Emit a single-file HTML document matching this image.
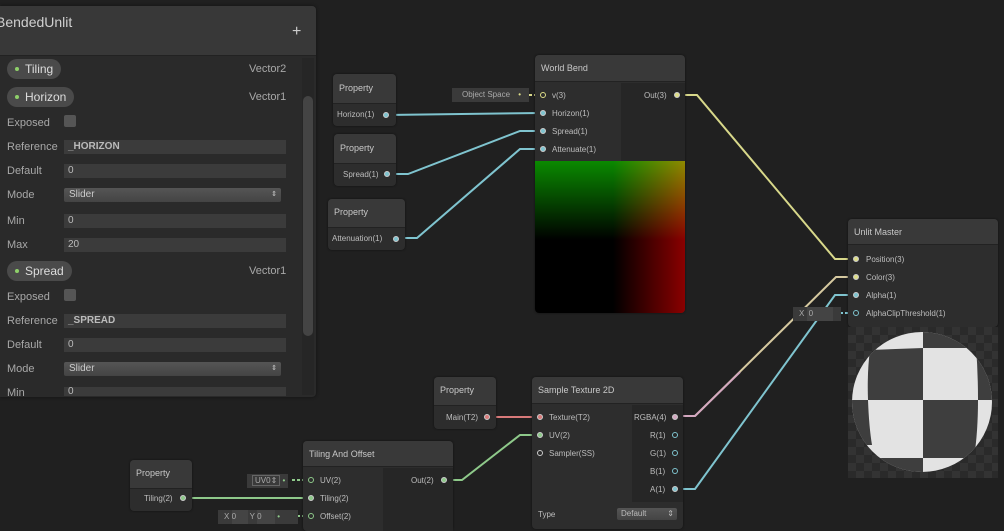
<!DOCTYPE html>
<html><head><meta charset="utf-8"><style>
*{box-sizing:border-box;margin:0;padding:0}
body{width:1004px;height:527px;overflow:hidden;background:#202020;font-family:"Liberation Sans",sans-serif;color:#c4c4c4;position:relative}
.a{position:absolute}
.node{position:absolute;background:#2d2d2d;border-radius:4px;box-shadow:0 0 2px #111}
.hd{position:absolute;left:0;right:0;top:0;background:#393939;border-radius:4px 4px 0 0;border-bottom:1px solid #222;font-size:9px;color:#c8c8c8;padding-left:6px}
.t{position:absolute;font-size:8px;color:#bdbdbd;white-space:nowrap}
.port{position:absolute;width:6px;height:6px;border-radius:50%;border:1px solid #ccc}
.bb{font-size:11px;color:#a8a8a8}
.fld{position:absolute;left:64px;width:222px;height:14px;background:#3b3b3b;font-size:10px;color:#bbb;padding-left:4px;line-height:14px}
.dd{position:absolute;left:64px;width:217px;height:14px;background:linear-gradient(#555,#444);border-radius:2px;font-size:10px;color:#ccc;padding-left:5px;line-height:14px}
.pill{position:absolute;left:7px;height:20px;border-radius:10px;background:#4a4a4a;font-size:12px;color:#ddd;line-height:20px;padding:0 8px 0 18px}
.pill:before{content:"";position:absolute;left:8px;top:8px;width:4px;height:4px;border-radius:50%;background:#8ed06a}
.lbl{position:absolute;left:7px;font-size:11px;color:#a8a8a8}
.chk{position:absolute;left:64px;width:12px;height:12px;background:#555;border-radius:2px}
.box{position:absolute;background:#3a3a3a;font-size:8px;color:#aaa;line-height:14px;height:14px}
</style></head><body>

<svg class="a" style="left:0;top:0" width="1004" height="527">
<g fill="none" stroke-width="2">
<path d="M386 115 L541 113" stroke="#7fc4cf"/>
<path d="M387 174 L408 174 L520 131 L541 131" stroke="#7fc4cf"/>
<path d="M396 238 L417 238 L520 149 L541 149" stroke="#7fc4cf"/>
<path d="M677 95 L697 95 L835 259 L856 259" stroke="#d8d88a"/>
<path d="M675 416 L695 416 L836 277 L856 277" stroke="#d6c9a0"/>
<path d="M675 416 L695 416 L740 372" stroke="#d4a8c0"/>
<path d="M675 489 L695 489 L835 295 L856 295" stroke="#7fc4cf"/>
<path d="M488 417 L540 417" stroke="#d87a7a"/>
<path d="M444 480 L462 480 L520 435 L540 435" stroke="#8ec98a"/>
<path d="M184 498 L310 498" stroke="#8ec98a"/>
<path d="M529 95 L541 95" stroke="#d8d88a" stroke-dasharray="3 2"/>
<path d="M292 480 L310 480 M292 516 L310 516" stroke="#8ec98a" stroke-dasharray="3 2"/>
<path d="M840 313 L856 313" stroke="#7fc4cf" stroke-dasharray="3 2"/>
</g></svg>

<!-- Blackboard -->
<div class="a" style="left:0;top:6px;width:316px;height:391px;background:#2a2a2a;border-radius:0 4px 4px 0;box-shadow:0 0 3px #111">
 <div class="a" style="left:0;top:0;width:316px;height:50px;background:#383838;border-bottom:1px solid #222;border-radius:0 4px 0 0"></div>
 <div class="a" style="left:-4px;top:8px;font-size:14px;color:#d0d0d0">BendedUnlit</div>
 <div class="a" style="left:292px;top:17px;font-size:16px;color:#ccc">+</div>
 <div class="pill" style="top:53px">Tiling</div><div class="a bb" style="left:249px;top:57px">Vector2</div>
 <div class="pill" style="top:81px">Horizon</div><div class="a bb" style="left:249px;top:85px">Vector1</div>
 <div class="lbl" style="top:111px">Exposed</div><div class="chk" style="top:109px"></div>
 <div class="lbl" style="top:135px">Reference</div><div class="fld" style="top:134px;font-weight:bold">_HORIZON</div>
 <div class="lbl" style="top:159px">Default</div><div class="fld" style="top:158px">0</div>
 <div class="lbl" style="top:183px">Mode</div><div class="dd" style="top:182px">Slider<span style="float:right;margin-right:4px;font-size:7px">⇕</span></div>
 <div class="lbl" style="top:209px">Min</div><div class="fld" style="top:208px">0</div>
 <div class="lbl" style="top:233px">Max</div><div class="fld" style="top:232px">20</div>
 <div class="pill" style="top:255px">Spread</div><div class="a bb" style="left:249px;top:259px">Vector1</div>
 <div class="lbl" style="top:285px">Exposed</div><div class="chk" style="top:283px"></div>
 <div class="lbl" style="top:309px">Reference</div><div class="fld" style="top:308px;font-weight:bold">_SPREAD</div>
 <div class="lbl" style="top:333px">Default</div><div class="fld" style="top:332px">0</div>
 <div class="lbl" style="top:357px">Mode</div><div class="dd" style="top:356px">Slider<span style="float:right;margin-right:4px;font-size:7px">⇕</span></div>
 <div class="lbl" style="top:381px;height:9px;overflow:hidden">Min</div><div class="fld" style="top:381px;height:9px;line-height:9px;overflow:hidden">0</div>
 <div class="a" style="left:302px;top:52px;width:12px;height:337px;background:#262626"></div>
 <div class="a" style="left:303px;top:90px;width:10px;height:240px;background:#444;border-radius:5px"></div>
</div>

<!-- Property nodes -->
<div class="node" style="left:333px;top:74px;width:63px;height:52px"><div class="hd" style="height:30px;line-height:28px">Property</div><div class="t" style="left:4px;top:36px">Horizon(1)</div><div class="port" style="left:50px;top:38px;background:#7fc4cf"></div></div>
<div class="node" style="left:334px;top:134px;width:62px;height:52px"><div class="hd" style="height:30px;line-height:28px">Property</div><div class="t" style="left:9px;top:36px">Spread(1)</div><div class="port" style="left:50px;top:37px;background:#7fc4cf"></div></div>
<div class="node" style="left:328px;top:199px;width:77px;height:51px"><div class="hd" style="height:29px;line-height:27px">Property</div><div class="t" style="left:4px;top:35px">Attenuation(1)</div><div class="port" style="left:65px;top:37px;background:#7fc4cf"></div></div>

<!-- World Bend -->
<div class="box" style="left:452px;top:88px;width:77px;padding-left:10px">Object Space <span style="color:#dd8;margin-left:6px">•</span></div>
<div class="node" style="left:535px;top:55px;width:150px;height:258px;overflow:hidden">
 <div class="hd" style="height:27px;line-height:27px">World Bend</div>
 <div class="a" style="left:86px;top:28px;width:64px;height:78px;background:#262626"></div>
 <div class="port" style="left:5px;top:37px;border-color:#dd8"></div><div class="t" style="left:17px;top:36px">v(3)</div>
 <div class="port" style="left:5px;top:55px;background:#7fc4cf"></div><div class="t" style="left:17px;top:54px">Horizon(1)</div>
 <div class="port" style="left:5px;top:73px;background:#7fc4cf"></div><div class="t" style="left:17px;top:72px">Spread(1)</div>
 <div class="port" style="left:5px;top:91px;background:#7fc4cf"></div><div class="t" style="left:17px;top:90px">Attenuate(1)</div>
 <div class="t" style="left:109px;top:36px">Out(3)</div><div class="port" style="left:139px;top:37px;background:#dd8"></div>
 <div class="a" style="left:0;top:106px;width:150px;height:152px;background:linear-gradient(to right,#000 52%,#8a0000 100%),linear-gradient(to bottom,#0a8a00 0%,#000 52%);background-blend-mode:screen"></div>
</div>

<!-- Unlit Master -->
<div class="box" style="left:793px;top:307px;width:48px;padding-left:6px">X <span style="display:inline-block;width:26px;background:#444;padding-left:2px">0</span></div>
<div class="node" style="left:848px;top:219px;width:150px;height:108px">
 <div class="hd" style="height:26px;line-height:26px">Unlit Master</div>
 <div class="port" style="left:5px;top:37px;background:#dd8"></div><div class="t" style="left:18px;top:36px">Position(3)</div>
 <div class="port" style="left:5px;top:55px;background:#dd8"></div><div class="t" style="left:18px;top:54px">Color(3)</div>
 <div class="port" style="left:5px;top:73px;background:#7fc4cf"></div><div class="t" style="left:18px;top:72px">Alpha(1)</div>
 <div class="port" style="left:5px;top:91px;border-color:#7fc4cf"></div><div class="t" style="left:18px;top:90px">AlphaClipThreshold(1)</div>
</div>
<div class="a" style="left:848px;top:327px;width:150px;height:151px;background-color:#2a2a2a;background-image:linear-gradient(45deg,#333 25%,transparent 25%,transparent 75%,#333 75%),linear-gradient(45deg,#333 25%,transparent 25%,transparent 75%,#333 75%);background-size:16px 16px;background-position:0 0,8px 8px"></div>
<svg class="a" style="left:848px;top:327px" width="150" height="151">
<defs><clipPath id="c"><circle cx="74" cy="75" r="70"/></clipPath></defs>
<g clip-path="url(#c)">
<rect x="0" y="0" width="150" height="151" fill="#e3e3e3"/>
<path d="M22 23 L75 21 L75 73 L20 73 Q19 45 22 23Z" fill="#3e3e3e"/>
<path d="M75 73 L130 73 Q130 105 126 131 L75 131Z" fill="#3e3e3e"/>
<path d="M75 0 L150 0 L150 21 L75 21Z" fill="#3e3e3e"/>
<path d="M128 20 L150 20 L150 73 L130 73 Q130 45 128 20Z" fill="#3e3e3e"/>
<path d="M0 73 L20 73 Q21 100 24 118 L0 118Z" fill="#3e3e3e"/>
<path d="M22 131 L75 131 L75 151 L22 151Z" fill="#3e3e3e"/>
</g></svg>

<!-- Property Main -->
<div class="node" style="left:434px;top:377px;width:62px;height:52px"><div class="hd" style="height:29px;line-height:27px">Property</div><div class="t" style="left:12px;top:36px">Main(T2)</div><div class="port" style="left:50px;top:37px;background:#d87a7a"></div></div>

<!-- Sample Texture 2D -->
<div class="node" style="left:532px;top:377px;width:151px;height:152px">
 <div class="hd" style="height:27px;line-height:27px">Sample Texture 2D</div>
 <div class="a" style="left:100px;top:28px;width:51px;height:97px;background:#262626"></div>
 <div class="port" style="left:5px;top:37px;background:#d87a7a"></div><div class="t" style="left:17px;top:36px">Texture(T2)</div>
 <div class="port" style="left:5px;top:55px;background:#8ec98a"></div><div class="t" style="left:17px;top:54px">UV(2)</div>
 <div class="port" style="left:5px;top:73px"></div><div class="t" style="left:17px;top:72px">Sampler(SS)</div>
 <div class="t" style="left:102px;top:36px">RGBA(4)</div><div class="port" style="left:140px;top:37px;background:#d4a8c0"></div>
 <div class="t" style="left:118px;top:54px">R(1)</div><div class="port" style="left:140px;top:55px;border-color:#7fc4cf"></div>
 <div class="t" style="left:118px;top:72px">G(1)</div><div class="port" style="left:140px;top:73px;border-color:#7fc4cf"></div>
 <div class="t" style="left:118px;top:90px">B(1)</div><div class="port" style="left:140px;top:91px;border-color:#7fc4cf"></div>
 <div class="t" style="left:118px;top:108px">A(1)</div><div class="port" style="left:140px;top:109px;background:#7fc4cf"></div>
 <div class="t" style="left:6px;top:133px">Type</div>
 <div class="a" style="left:85px;top:131px;width:60px;height:12px;background:linear-gradient(#555,#444);border-radius:2px;font-size:8px;color:#bbb;padding-left:4px;line-height:12px">Default<span style="float:right;margin-right:3px">⇕</span></div>
</div>

<!-- Tiling And Offset -->
<div class="box" style="left:247px;top:474px;width:41px;padding-left:5px"><span style="border:1px solid #666;padding:0 2px;line-height:10px">UV0⇕</span> <span style="color:#8ec98a">•</span></div>
<div class="box" style="left:218px;top:510px;width:80px;padding-left:6px">X <span style="display:inline-block;width:16px;background:#444">0</span> Y <span style="display:inline-block;width:18px;background:#444">0</span> <span style="color:#8ec98a">•</span></div>
<div class="node" style="left:303px;top:441px;width:150px;height:90px">
 <div class="hd" style="height:26px;line-height:26px">Tiling And Offset</div>
 <div class="a" style="left:80px;top:27px;width:70px;height:63px;background:#262626"></div>
 <div class="port" style="left:5px;top:36px;border-color:#8ec98a"></div><div class="t" style="left:17px;top:35px">UV(2)</div>
 <div class="port" style="left:5px;top:54px;background:#8ec98a"></div><div class="t" style="left:17px;top:53px">Tiling(2)</div>
 <div class="port" style="left:5px;top:72px;border-color:#8ec98a"></div><div class="t" style="left:17px;top:71px">Offset(2)</div>
 <div class="t" style="left:108px;top:35px">Out(2)</div><div class="port" style="left:138px;top:36px;background:#8ec98a"></div>
</div>

<!-- Property Tiling -->
<div class="node" style="left:130px;top:460px;width:62px;height:51px"><div class="hd" style="height:29px;line-height:27px">Property</div><div class="t" style="left:14px;top:34px">Tiling(2)</div><div class="port" style="left:50px;top:35px;background:#8ec98a"></div></div>

</body></html>
